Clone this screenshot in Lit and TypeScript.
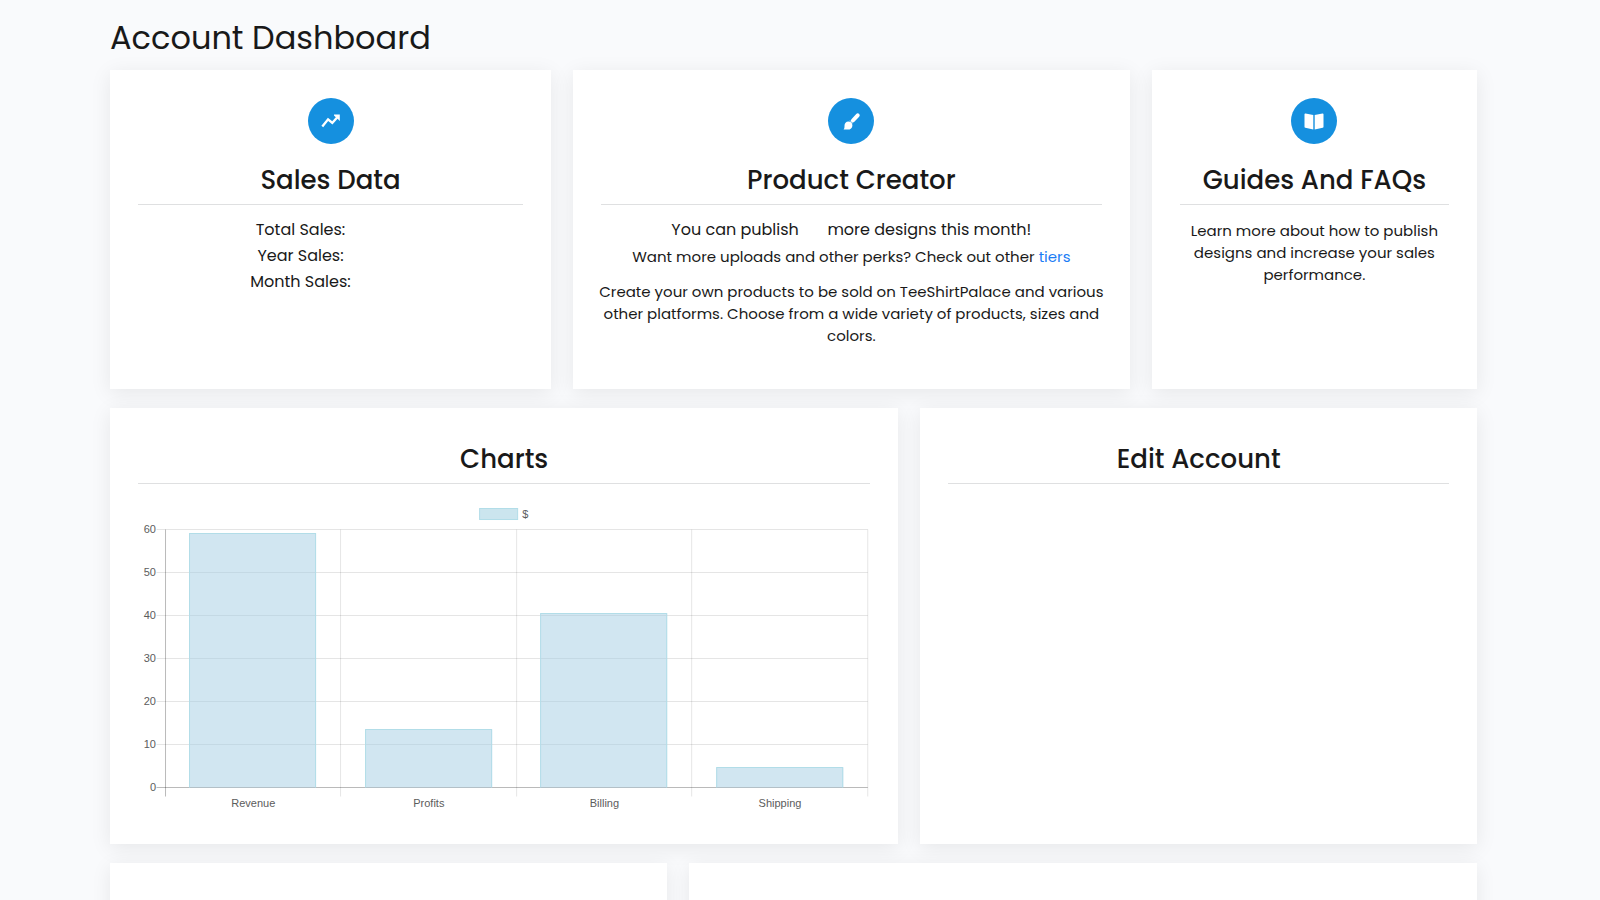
import { LitElement, html, svg, css } from "lit";
import { customElement } from "lit/decorators.js";

interface Bar {
  label: string;
  value: number;
}

@customElement("bar-chart")
class BarChart extends LitElement {
  static styles = css`
    :host { display: block; }
    .chart { display: block; width: 100%; height: auto; }
    .tick { font: 11px "Helvetica Neue", "Liberation Sans", Arial, sans-serif; fill: #5c5c5c; }
    .end { text-anchor: end; }
    .mid { text-anchor: middle; }
    .grid { stroke: rgba(0, 0, 0, 0.1); }
    .axis { stroke: rgba(0, 0, 0, 0.27); }
    .bar { fill: rgba(164, 206, 227, 0.5); }
    .edge { fill: none; stroke: #b2dde8; }
    .key { fill: #cbe5ee; stroke: #b2dde8; }
  `;

  bars: Bar[] = [
    { label: "Revenue", value: 59 },
    { label: "Profits", value: 13.5 },
    { label: "Billing", value: 40.4 },
    { label: "Shipping", value: 4.7 },
  ];

  render() {
    const left = 27.5;
    const right = 729.5;
    const top = 45.5;
    const base = 303.5;
    const max = 60;
    const slot = (right - left) / this.bars.length;
    const barWidth = Math.ceil(slot * 0.72);
    const y = (v: number) => base - ((base - top) * v) / max;
    const snap = (n: number) => Math.floor(n) + 0.5;
    return html`
      <svg class="chart" viewBox="0 0 732 332" role="img" aria-label="Revenue, profits, billing and shipping in dollars">
        <rect class="key" x="341.5" y="24.5" width="38" height="11"></rect>
        <text class="tick" x="384" y="34">$</text>
        ${[0, 10, 20, 30, 40, 50, 60].map(
          (v) => svg`
            <line class=${v ? "grid" : "axis"} x1=${left - 9} x2=${right} y1=${snap(y(v))} y2=${snap(y(v))}></line>
            <text class="tick end" x="18" y=${Math.round(y(v)) + 3}>${v}</text>`
        )}
        ${[0, 1, 2, 3, 4].map((i) => {
          const x = snap(left + slot * i - 0.5);
          return svg`
            <line class=${i ? "grid" : "axis"} x1=${x} x2=${x} y1=${top} y2=${base + 9}></line>`;
        })}
        ${this.bars.map((b, i) => {
          const x = snap(left + slot * i + (slot - barWidth) / 2);
          const t = snap(y(b.value));
          return svg`
            <rect class="bar" x=${x - 0.5} y=${t} width=${barWidth} height=${base - t}></rect>
            <path class="edge" d="M${x} ${base}V${t}h${barWidth - 1}V${base}"></path>
            <text class="tick mid" x=${left + slot * (i + 0.5)} y="323">${b.label}</text>`;
        })}
      </svg>
    `;
  }
}

@customElement("app-root")
class AppRoot extends LitElement {
  static styles = css`
    :host {
      display: flex;
      flex-direction: column;
      box-sizing: border-box;
      min-height: 100vh;
      padding: 15px 123px 0 110px;
      overflow: hidden;
      background: #f9fafc;
      color: #191919;
      font-family: Poppins, Inter, "Open Sans", sans-serif;
    }
    h1, h2, p, dl, dd { margin: 0; }
    h1 { font-size: 32px; line-height: 46px; font-weight: 400; margin-bottom: 9px; }
    .grid {
      flex: 1;
      display: grid;
      grid-template-columns: repeat(12, minmax(0, 1fr));
      grid-template-rows: auto auto 1fr;
      gap: 19px 22px;
    }
    .card {
      padding: 28px;
      background: #fff;
      text-align: center;
      box-shadow: 0 4px 20px rgba(0, 0, 0, 0.08);
    }
    .tall { min-height: 263px; }
    .span3 { grid-column: span 3; }
    .span4 { grid-column: span 4; }
    .span5 { grid-column: span 5; }
    .span7 { grid-column: span 7; }
    .badge {
      display: grid;
      place-items: center;
      width: 46px;
      height: 46px;
      margin: 0 auto 13px;
      border-radius: 50%;
      background: #1590df;
    }
    .icon { width: 24px; height: 24px; fill: #fff; }
    .handle { stroke: #fff; stroke-width: 4; stroke-linecap: round; }
    h2 {
      font-size: 26px;
      line-height: 47px;
      font-weight: 500;
      border-bottom: 1px solid #dfe0e1;
    }
    .stats { margin-top: 12px; font-size: 16px; line-height: 26px; }
    .stat { display: flex; justify-content: center; }
    .stat dd { width: 60px; }
    .quota { margin-top: 12px; font-size: 16px; line-height: 26px; }
    .count { display: inline-block; width: 20px; }
    .text { font-size: 15px; line-height: 22px; }
    .perks { margin-top: 3px; }
    .about { margin: 13px -4px 0; }
    .guide { margin-top: 15px; }
    a { color: #1a7cf5; text-decoration: none; }
  `;

  render() {
    return html`
      <h1>Account Dashboard</h1>
      <main class="grid">
        <section class="card tall span4">
          <div class="badge">
            <svg class="icon" viewBox="0 0 24 24" aria-hidden="true">
              <path d="M15 5.600h5.800v6.300l-2.200-2.100-5.200 5.600-4.200-3.300-5 6.200-1.800-1.500 6.500-8 4.300 3.400 3.600-3.900-1.800-1.700z"></path>
            </svg>
          </div>
          <h2>Sales Data</h2>
          <dl class="stats">
            <div class="stat"><dt>Total Sales:</dt><dd></dd></div>
            <div class="stat"><dt>Year Sales:</dt><dd></dd></div>
            <div class="stat"><dt>Month Sales:</dt><dd></dd></div>
          </dl>
        </section>
        <section class="card tall span5">
          <div class="badge">
            <svg class="icon" viewBox="0 0 24 24" aria-hidden="true">
              <path class="handle" d="M18.700 6.300l-4.800 5.200"></path>
              <path d="M10.800 11.200l3.200 3-.3.3-3.200-3z"></path>
              <path d="M9.400 12.600c2.400 0 4 1.600 4 3.800 0 2.600-2 4.200-4.600 4.200H4.600c.8-.9.9-2 .9-3.800 0-2.500 1.600-4.200 3.900-4.200z"></path>
            </svg>
          </div>
          <h2>Product Creator</h2>
          <p class="quota">You can publish <span class="count"></span> more designs this month!</p>
          <p class="text perks">Want more uploads and other perks? Check out other <a href="#tiers">tiers</a></p>
          <p class="text about">Create your own products to be sold on TeeShirtPalace and various other platforms. Choose from a wide variety of products, sizes and colors.</p>
        </section>
        <section class="card tall span3">
          <div class="badge">
            <svg class="icon" viewBox="0 0 24 24" aria-hidden="true">
              <path d="M2.500 5.300q0-1 1-.900l7.800 1.600v14.400l-8-1.700q-.8-.2-.8-1zM21.500 5.300q0-1-1-.900l-7.800 1.600v14.400l8-1.700q.8-.2.8-1z"></path>
            </svg>
          </div>
          <h2>Guides And FAQs</h2>
          <p class="text guide">Learn more about how to publish designs and increase your sales performance.</p>
        </section>
        <section class="card span7">
          <h2>Charts</h2>
          <bar-chart></bar-chart>
        </section>
        <section class="card span5">
          <h2>Edit Account</h2>
        </section>
        <section class="card span5"></section>
        <section class="card span7"></section>
      </main>
    `;
  }
}
